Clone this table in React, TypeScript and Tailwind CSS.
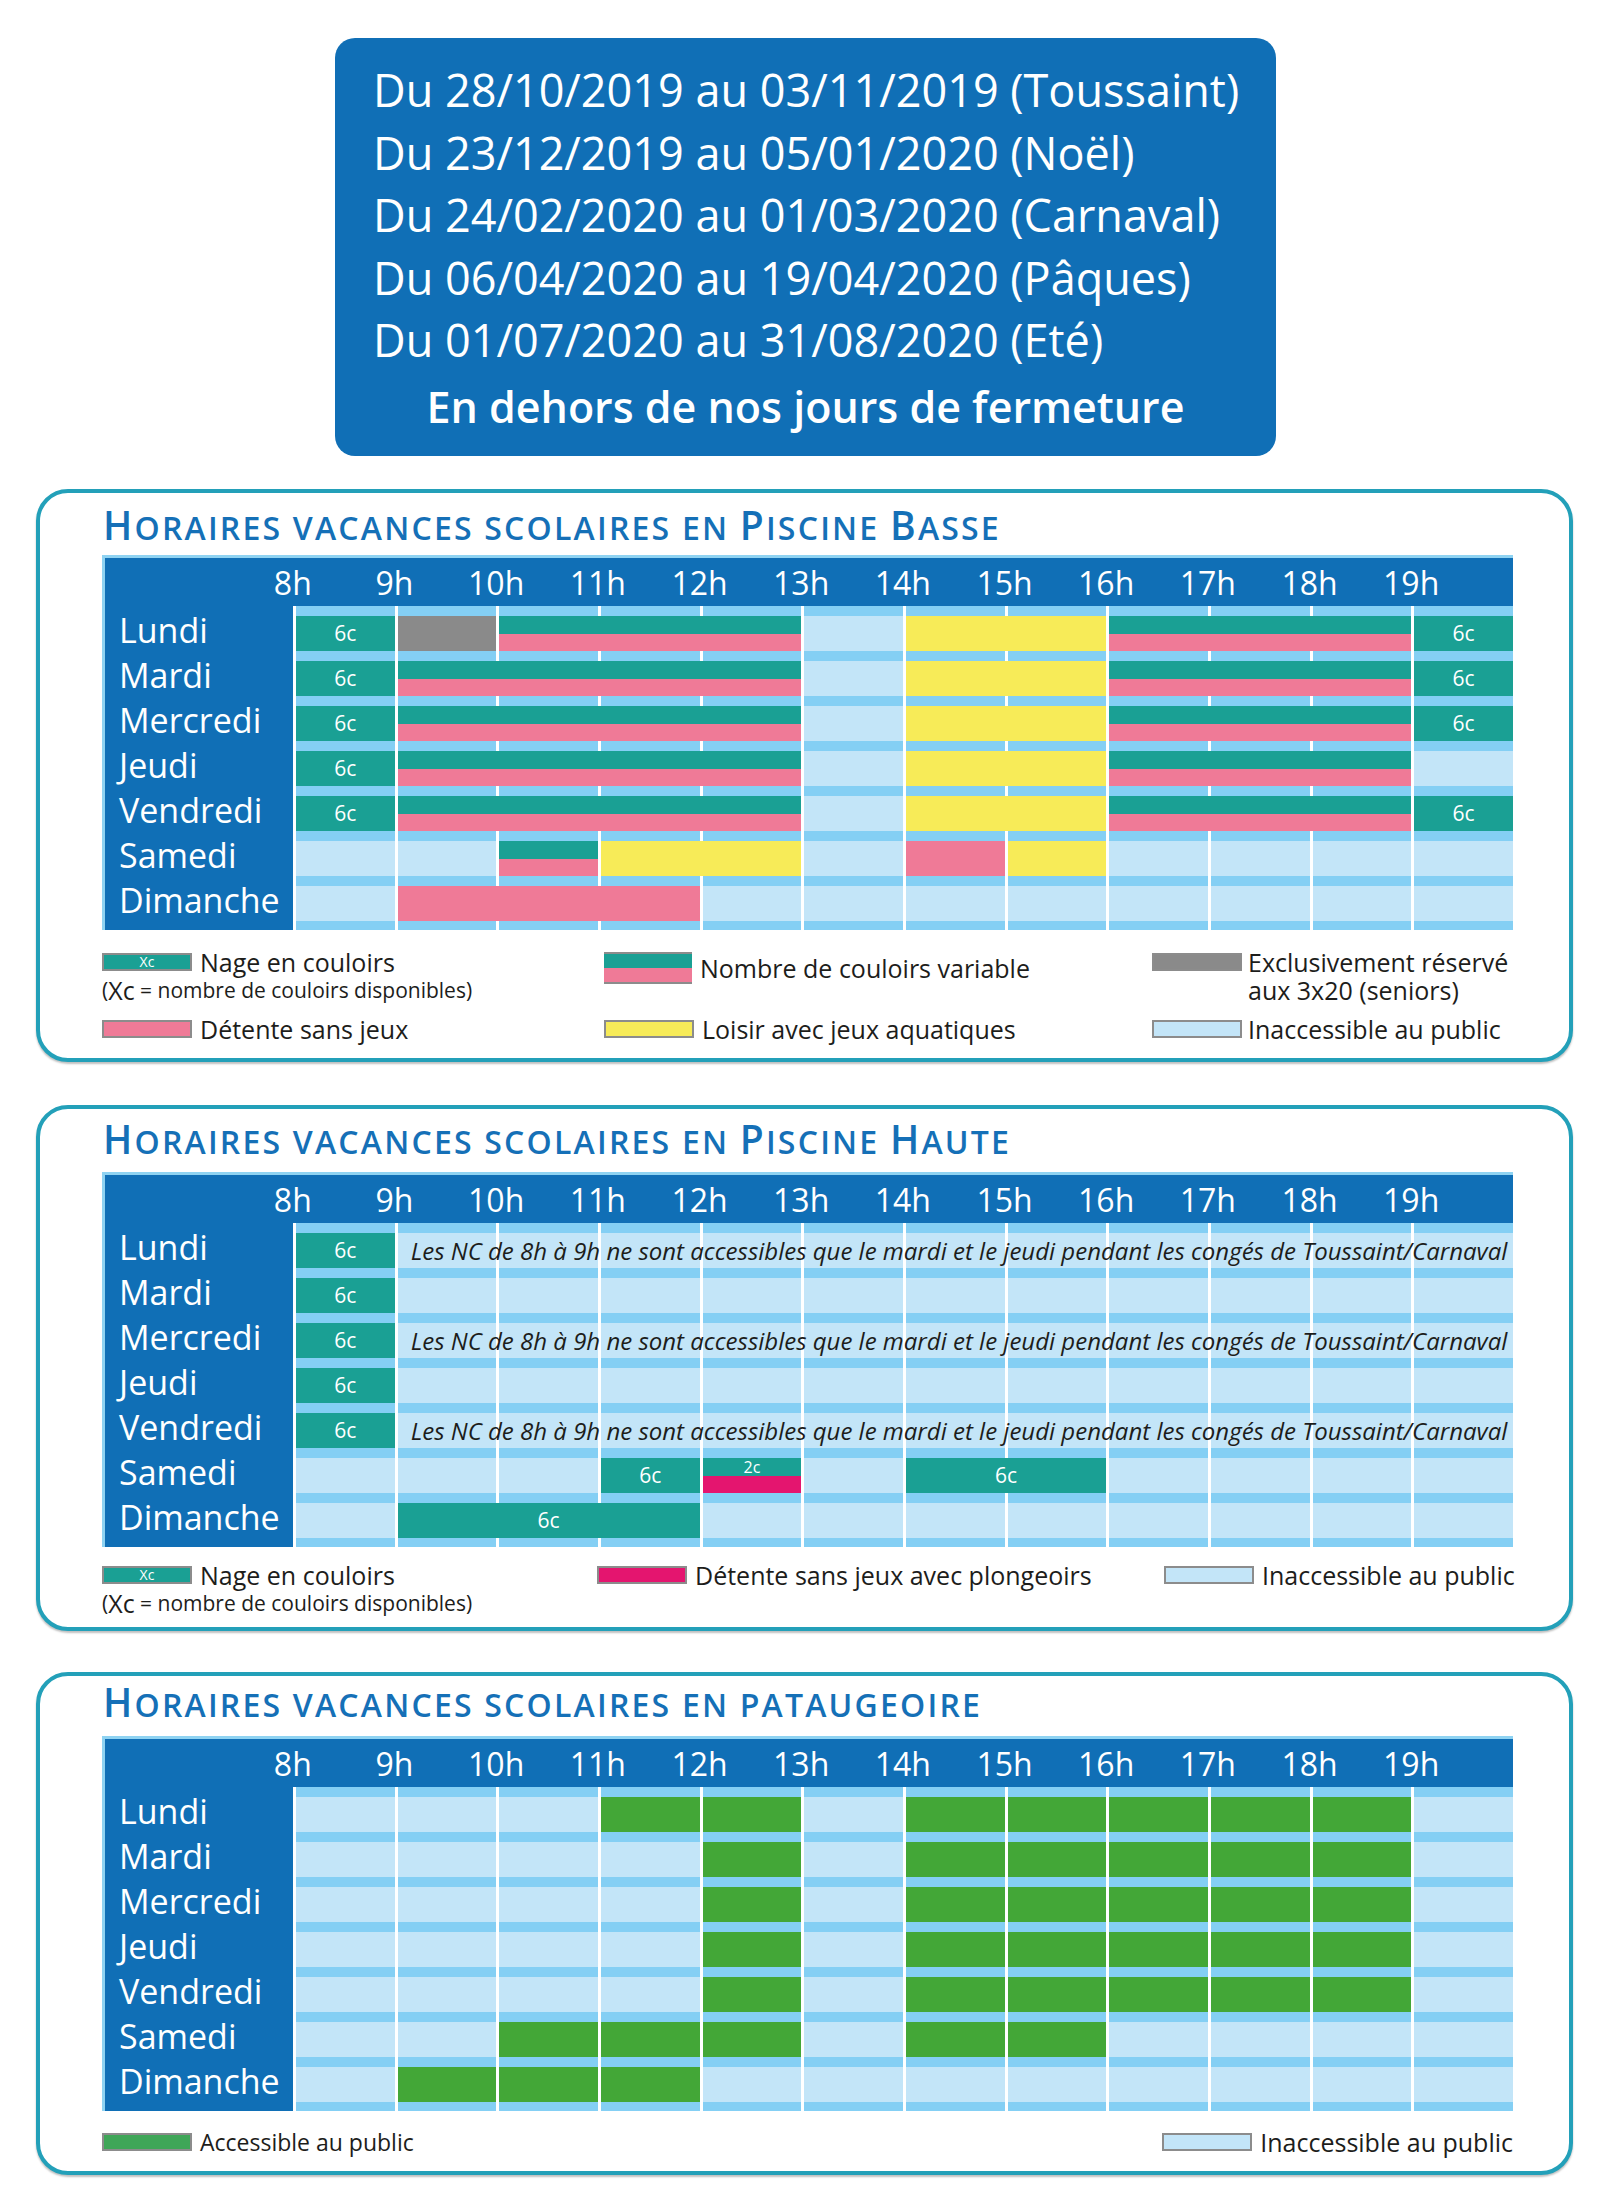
import React from 'react'

type Kind = 'light' | 'teal' | 'pink' | 'yellow' | 'gray' | 'split' | 'splitMag' | 'green'

interface Seg {
  kind: Kind
  span: number
  label?: string
}

interface Row {
  day: string
  segs: Seg[]
  note?: boolean
}

const HOURS = ['8h', '9h', '10h', '11h', '12h', '13h', '14h', '15h', '16h', '17h', '18h', '19h']

const DATES = [
  'Du 28/10/2019 au 03/11/2019 (Toussaint)',
  'Du 23/12/2019 au 05/01/2020 (Noël)',
  'Du 24/02/2020 au 01/03/2020 (Carnaval)',
  'Du 06/04/2020 au 19/04/2020 (Pâques)',
  'Du 01/07/2020 au 31/08/2020 (Eté)',
]

const NOTE = 'Les NC de 8h à 9h ne sont accessibles que le mardi et le jeudi pendant les congés de Toussaint/Carnaval'

const SPAN: Record<number, string> = {
  1: 'col-span-1',
  2: 'col-span-2',
  3: 'col-span-3',
  4: 'col-span-4',
}

const BG: Record<Kind, string> = {
  light: 'bg-[#c3e5f8]',
  teal: 'bg-[#1aa094]',
  pink: 'bg-[#ef7a97]',
  yellow: 'bg-[#f7eb58]',
  gray: 'bg-[#8a8a8a]',
  green: 'bg-[#43a737]',
  split: '',
  splitMag: '',
}

const s = (kind: Kind, span = 1, label?: string): Seg => ({ kind, span, label })
const light = (n: number) => Array.from({ length: n }, () => s('light'))
const green = (n: number) => Array.from({ length: n }, () => s('green'))

// Piscine basse
const weekBasse = [s('teal', 1, '6c'), s('split', 4), s('light'), s('yellow', 2), s('split', 3), s('teal', 1, '6c')]
const BASSE: Row[] = [
  { day: 'Lundi', segs: [s('teal', 1, '6c'), s('gray'), s('split', 3), s('light'), s('yellow', 2), s('split', 3), s('teal', 1, '6c')] },
  { day: 'Mardi', segs: weekBasse },
  { day: 'Mercredi', segs: weekBasse },
  { day: 'Jeudi', segs: [s('teal', 1, '6c'), s('split', 4), s('light'), s('yellow', 2), s('split', 3), s('light')] },
  { day: 'Vendredi', segs: weekBasse },
  { day: 'Samedi', segs: [...light(2), s('split'), s('yellow', 2), s('light'), s('pink'), s('yellow'), ...light(4)] },
  { day: 'Dimanche', segs: [s('light'), s('pink', 3), ...light(8)] },
]

// Piscine haute
const earlyHaute = [s('teal', 1, '6c'), ...light(11)]
const HAUTE: Row[] = [
  { day: 'Lundi', segs: earlyHaute, note: true },
  { day: 'Mardi', segs: earlyHaute },
  { day: 'Mercredi', segs: earlyHaute, note: true },
  { day: 'Jeudi', segs: earlyHaute },
  { day: 'Vendredi', segs: earlyHaute, note: true },
  { day: 'Samedi', segs: [...light(3), s('teal', 1, '6c'), s('splitMag', 1, '2c'), s('light'), s('teal', 2, '6c'), ...light(4)] },
  { day: 'Dimanche', segs: [s('light'), s('teal', 3, '6c'), ...light(8)] },
]

// Pataugeoire
const weekPatau = [...light(4), ...green(1), s('light'), ...green(5), s('light')]
const PATAU: Row[] = [
  { day: 'Lundi', segs: [...light(3), ...green(2), s('light'), ...green(5), s('light')] },
  { day: 'Mardi', segs: weekPatau },
  { day: 'Mercredi', segs: weekPatau },
  { day: 'Jeudi', segs: weekPatau },
  { day: 'Vendredi', segs: weekPatau },
  { day: 'Samedi', segs: [...light(2), ...green(3), s('light'), ...green(2), ...light(4)] },
  { day: 'Dimanche', segs: [s('light'), ...green(3), ...light(8)] },
]

function Strip({ last }: { last?: boolean }) {
  return (
    <div className={`grid grid-cols-12 ${last ? 'h-[9px]' : 'h-[10px]'}`}>
      {HOURS.map(h => <div key={h} className="border-l-[3px] border-white" />)}
    </div>
  )
}

function Cell({ seg }: { seg: Seg }) {
  if (seg.kind === 'split' || seg.kind === 'splitMag') {
    return (
      <div className={`flex flex-col border-l-[3px] border-white ${SPAN[seg.span]}`}>
        <div className="flex h-[18px] items-center justify-center bg-[#1aa094] text-[16px] leading-none text-white">{seg.label}</div>
        <div className={`h-[17px] ${seg.kind === 'split' ? 'bg-[#ef7a97]' : 'bg-[#e4156f]'}`} />
      </div>
    )
  }
  return (
    <div className={`flex items-center justify-center border-l-[3px] border-white ${SPAN[seg.span]} ${BG[seg.kind]}`}>
      {seg.label && <span className="text-[21px] font-medium leading-none text-white">{seg.label}</span>}
    </div>
  )
}

function Table({ rows }: { rows: Row[] }) {
  return (
    <div className="w-[1411px] border-l-[3px] border-t-[3px] border-[#8fd3f2] bg-[#106fb6]">
      <div className="flex h-[48px] items-center pt-[2px]">
        <div className="w-[137px] shrink-0" />
        <div className="grid w-[1220px] grid-cols-12">
          {HOURS.map(h => (
            <div key={h} className="text-center text-[32px] font-medium leading-none text-white">{h}</div>
          ))}
        </div>
      </div>
      <div className="flex">
        <div className="w-[188px] shrink-0">
          {rows.map(r => (
            <div key={r.day} className="h-[45px] pl-[14px] pt-[2px] text-[34px] font-medium leading-[45px] text-white">{r.day}</div>
          ))}
        </div>
        <div className="w-[1220px] bg-[#84cff4]">
          {rows.map(r => (
            <div key={r.day}>
              <Strip />
              <div className="grid">
                <div className="col-start-1 row-start-1 grid h-[35px] grid-cols-12">
                  {r.segs.map((seg, i) => <Cell key={i} seg={seg} />)}
                </div>
                {r.note && (
                  <div className="col-start-1 row-start-1 z-10 flex h-[35px] items-center justify-center pl-[112px]">
                    <span className="whitespace-nowrap text-[24px] italic leading-none text-[#1d1d1b]">{NOTE}</span>
                  </div>
                )}
              </div>
            </div>
          ))}
          <Strip last />
        </div>
      </div>
    </div>
  )
}

function Title({ parts }: { parts: [string, boolean][] }) {
  return (
    <h2 className="ml-[1px] h-[39px] whitespace-nowrap font-semibold leading-none tracking-[2.2px] text-[#1570b7]">
      {parts.map(([t, big], i) => (
        <span key={i} className={big ? 'text-[39px]' : 'text-[32px]'}>{t}</span>
      ))}
    </h2>
  )
}

function Swatch({ className, children }: { className: string; children?: React.ReactNode }) {
  return (
    <div className={`flex h-[18px] w-[90px] shrink-0 items-center justify-center border-2 border-[#8c8c8c] text-[14px] leading-none text-white ${className}`}>
      {children}
    </div>
  )
}

function Item({ swatch, text, gap = 'gap-[8px]', size = 'text-[25px]' }: { swatch: React.ReactNode; text: string; gap?: string; size?: string }) {
  return (
    <div className={`flex h-[22px] items-center ${gap}`}>
      {swatch}
      <span className={`whitespace-nowrap leading-none text-[#1d1d1b] ${size}`}>{text}</span>
    </div>
  )
}

function XcNote() {
  return (
    <div className="flex h-[34px] items-center whitespace-nowrap text-[21px] leading-none text-[#1d1d1b]">
      (<span className="text-[25px]">Xc</span>&nbsp;=&nbsp;nombre de couloirs disponibles)
    </div>
  )
}

function Section({ children, className }: { children: React.ReactNode; className: string }) {
  return (
    <section className={`ml-[36px] w-[1537px] rounded-[32px] border-4 border-[#23a0b9] bg-white px-[62px] shadow-[0_2px_2px_rgba(0,0,0,0.25)] ${className}`}>
      {children}
    </section>
  )
}

export default function App() {
  return (
    <div className="min-h-[2209px] w-[1606px] overflow-hidden bg-white pt-[38px] font-['Open_Sans',sans-serif]">
      {/* Dates */}
      <div className="ml-[335px] w-[941px] rounded-[20px] bg-[#106fb6] pb-[18px] pl-[38px] pt-[21px] text-white">
        {DATES.map(d => (
          <p key={d} className="whitespace-nowrap text-[45px] font-medium leading-[62.5px]">{d}</p>
        ))}
        <p className="mt-[4px] pr-[38px] text-center text-[43px] font-semibold leading-[62.5px]">En dehors de nos jours de fermeture</p>
      </div>

      {/* Piscine basse */}
      <Section className="mt-[33px] pb-[18px] pt-[12px]">
        <Title parts={[['H', true], ['ORAIRES VACANCES SCOLAIRES EN ', false], ['P', true], ['ISCINE ', false], ['B', true], ['ASSE', false]]} />
        <div className="mt-[11px]">
          <Table rows={BASSE} />
        </div>
        <div className="mt-[21px] grid grid-cols-[502px_548px_1fr]">
          <div>
            <Item swatch={<Swatch className="bg-[#1aa094]">Xc</Swatch>} text="Nage en couloirs" />
            <XcNote />
          </div>
          <div className="flex h-[34px] items-center gap-[8px]">
            <div className="flex h-[32px] w-[88px] shrink-0 flex-col border-y-2 border-[#8c8c8c]">
              <div className="flex-1 bg-[#1aa094]" />
              <div className="flex-1 bg-[#ef7a97]" />
            </div>
            <span className="whitespace-nowrap text-[25px] leading-none text-[#1d1d1b]">Nombre de couloirs variable</span>
          </div>
          <div>
            <Item swatch={<Swatch className="bg-[#8a8a8a]" />} text="Exclusivement réservé" gap="gap-[6px]" />
            <div className="flex h-[34px] items-center pl-[96px] text-[25px] leading-none text-[#1d1d1b]">aux 3x20 (seniors)</div>
          </div>
          <div className="mt-[11px]">
            <Item swatch={<Swatch className="bg-[#ef7a97]" />} text="Détente sans jeux" />
          </div>
          <div className="mt-[11px]">
            <Item swatch={<Swatch className="bg-[#f7eb58]" />} text="Loisir avec jeux aquatiques" />
          </div>
          <div className="mt-[11px]">
            <Item swatch={<Swatch className="bg-[#c3e5f8]" />} text="Inaccessible au public" gap="gap-[6px]" />
          </div>
        </div>
      </Section>

      {/* Piscine haute */}
      <Section className="mt-[43px] pb-[7px] pt-[10px]">
        <Title parts={[['H', true], ['ORAIRES VACANCES SCOLAIRES EN ', false], ['P', true], ['ISCINE ', false], ['H', true], ['AUTE', false]]} />
        <div className="mt-[14px]">
          <Table rows={HAUTE} />
        </div>
        <div className="mt-[17px] grid grid-cols-[495px_567px_1fr]">
          <div>
            <Item swatch={<Swatch className="bg-[#1aa094]">Xc</Swatch>} text="Nage en couloirs" />
            <XcNote />
          </div>
          <Item swatch={<Swatch className="bg-[#e4156f]" />} text="Détente sans jeux avec plongeoirs" />
          <Item swatch={<Swatch className="bg-[#c3e5f8]" />} text="Inaccessible au public" />
        </div>
      </Section>

      {/* Pataugeoire */}
      <Section className="mt-[41px] pb-[18px] pt-[6px]">
        <Title parts={[['H', true], ['ORAIRES VACANCES SCOLAIRES EN PATAUGEOIRE', false]]} />
        <div className="mt-[15px]">
          <Table rows={PATAU} />
        </div>
        <div className="mt-[20px] flex w-[1411px] justify-between">
          <Item swatch={<Swatch className="bg-[#3fa658]" />} text="Accessible au public" size="text-[23px]" />
          <Item swatch={<Swatch className="bg-[#c3e5f8]" />} text="Inaccessible au public" />
        </div>
      </Section>
    </div>
  )
}
